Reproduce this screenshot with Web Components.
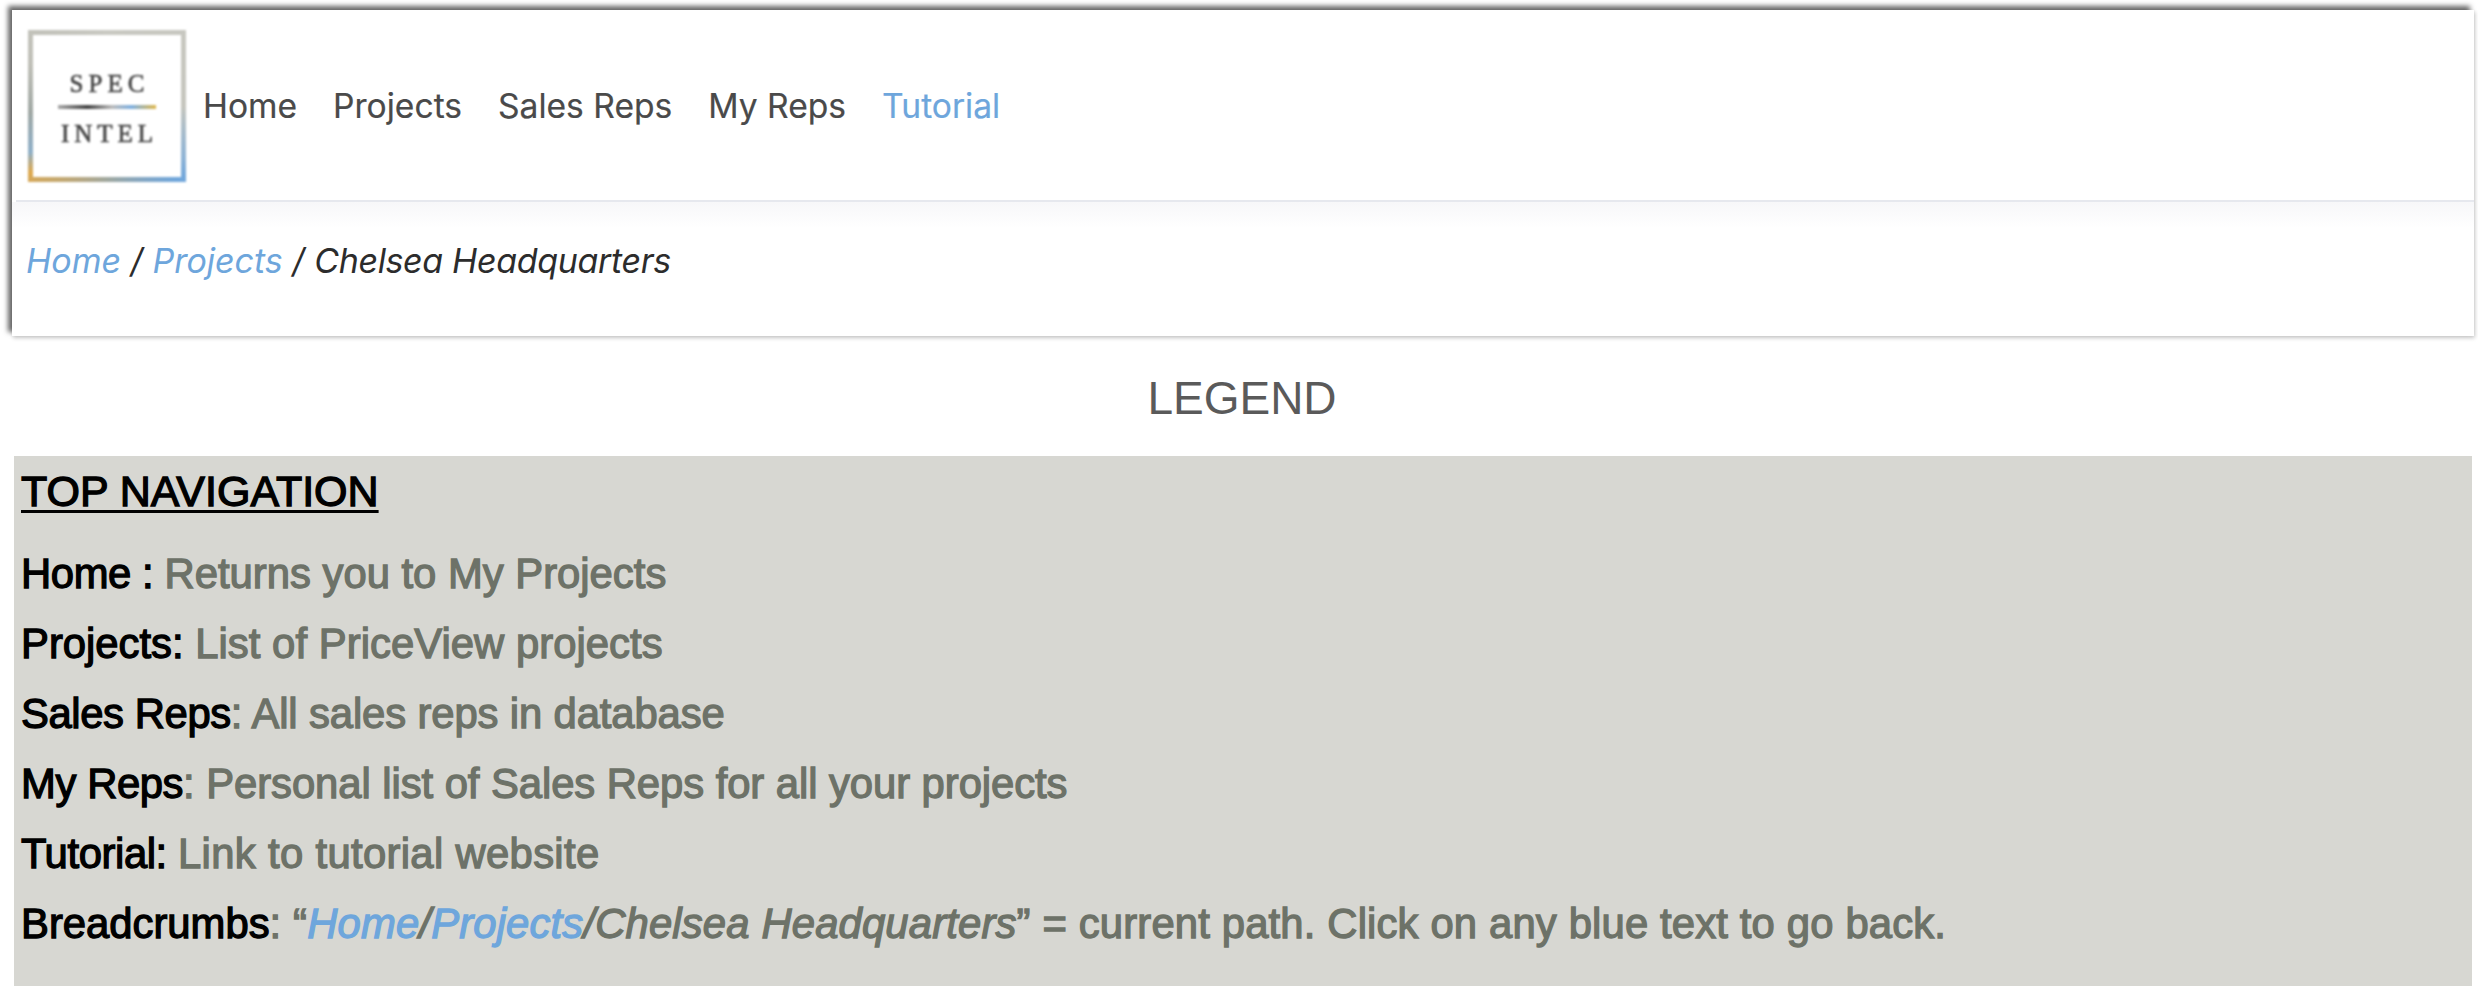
<!DOCTYPE html>
<html>
<head>
<meta charset="utf-8">
<title>Legend</title>
<style>
  html, body { margin: 0; padding: 0; background: #fff; }
  body { width: 2478px; height: 986px; overflow: hidden; font-family: "Liberation Sans", Arial, sans-serif; }
</style>
</head>
<body>
<spec-header>
  <nav-link slot="nav">Home</nav-link>
  <nav-link slot="nav">Projects</nav-link>
  <nav-link slot="nav">Sales Reps</nav-link>
  <nav-link slot="nav">My Reps</nav-link>
  <nav-link slot="nav" active>Tutorial</nav-link>
  <span slot="crumbs"><a>Home</a> / <a>Projects</a> / <span style="letter-spacing:-.35px">Chelsea Headquarters</span></span>
</spec-header>
<legend-title>LEGEND</legend-title>
<legend-panel>
  <span slot="title">TOP NAVIGATION</span>
  <legend-row label="Home : ">Returns you to My Projects</legend-row>
  <legend-row label="Projects: " style="--label-ls:0px;--value-ls:.05px">List of PriceView projects</legend-row>
  <legend-row label="Sales Reps" sep=": " style="--value-ls:-.12px">All sales reps in database</legend-row>
  <legend-row label="My Reps" sep=": " style="--value-ls:-.06px">Personal list of Sales Reps for all your projects</legend-row>
  <legend-row label="Tutorial: " style="--value-ls:.33px">Link to tutorial website</legend-row>
  <legend-row label="Breadcrumbs" sep=": " style="--label-ls:0px;--value-ls:.16px">“<i class="b">Home</i><i>/</i><i class="b">Projects</i><i>/Chelsea Headquarters</i>” = current path. Click on any blue text to go back.</legend-row>
</legend-panel>
<script>
  class SpecLogo extends HTMLElement {
    constructor() {
      super();
      this.attachShadow({ mode: "open" }).innerHTML = `
        <style>
          :host { display: block; width: 158px; height: 152px; flex: none; box-sizing: border-box;
            border: 5px solid; border-image: conic-gradient(from 0deg at 50% 50%, #c9c9c2 0deg, #c6c6be 90deg, #8fb4d6 125deg, #6fa6dc 135deg, #d0a860 225deg, #e0aa4e 228deg, #90b0c8 238deg, #a0a8a4 265deg, #c0c0b8 300deg, #c9c9c2 360deg) 1;
            font-family: "Liberation Serif", serif; color: #444; text-align: center; filter: blur(.8px); }
          .box { display: flex; flex-direction: column; align-items: center; padding-top: 35px; }
          .t { font-size: 25px; line-height: 27px; letter-spacing: 5px; margin-right: -5px; -webkit-text-stroke: .6px #444; }
          .l { width: 98px; height: 4px; margin: 8px 0 11px; background: linear-gradient(90deg, #aaa, #444 30%, #bbb 55%, #7fb0e0 75%, #e0b84e 100%); }
        </style>
        <div class="box"><div class="t">SPEC</div><div class="l"></div><div class="t">INTEL</div></div>`;
    }
  }
  customElements.define("spec-logo", SpecLogo);

  class NavLink extends HTMLElement {
    constructor() {
      super();
      this.attachShadow({ mode: "open" }).innerHTML = `
        <style>
          :host { display: block; color: #4a4a4a; }
          :host([active]) { color: #6ea6dc; }
        </style>
        <slot></slot>`;
    }
  }
  customElements.define("nav-link", NavLink);

  class SpecHeader extends HTMLElement {
    constructor() {
      super();
      this.attachShadow({ mode: "open" }).innerHTML = `
        <style>
          :host { display: block; box-sizing: border-box; margin: 10px 4px 0 12px; height: 326px; background: #fff;
            box-shadow: -4px -4px 5px #666, 1px 2px 4px #c8c8c8; font-family: Inter, sans-serif; }
          nav { display: flex; align-items: center; gap: 36px; height: 190px; padding: 0 0 0 12px;
            border-bottom: 2px solid #e6e8ee; margin-left: 4px; font-size: 33.6px; -webkit-text-stroke: .2px currentColor; }
          .logo { margin-right: -19px; margin-top: 1px; }
          .crumbs { height: 134px; box-sizing: border-box; padding: 38px 0 0 14px; font-size: 34px; font-style: italic; color: #2c2c2c;
            background: linear-gradient(#f7f7f9, #fff 26px); }
          ::slotted(span) { display: block; }
        </style>
        <nav><div class="logo"><spec-logo></spec-logo></div><slot name="nav"></slot></nav>
        <div class="crumbs"><slot name="crumbs"></slot></div>`;
    }
    connectedCallback() {
      // breadcrumb links live in light dom, colour them here
      this.querySelectorAll("a").forEach(a => { a.style.color = "#6ea6dc"; });
    }
  }
  customElements.define("spec-header", SpecHeader);

  class LegendTitle extends HTMLElement {
    constructor() {
      super();
      this.attachShadow({ mode: "open" }).innerHTML = `
        <style>
          :host { display: block; text-align: center; font-size: 46px; line-height: 50px; color: #5a5a5a; padding: 37px 0 33px 6px; height: 50px; }
        </style>
        <slot></slot>`;
    }
  }
  customElements.define("legend-title", LegendTitle);

  class LegendPanel extends HTMLElement {
    constructor() {
      super();
      this.attachShadow({ mode: "open" }).innerHTML = `
        <style>
          :host { display: block; box-sizing: border-box; margin: 0 6px 0 14px; height: 530px; background: #d7d7d2; padding: 10px 0 0 7px; }
          .title { font-size: 43px; line-height: 50px; color: #000; text-decoration: underline; text-decoration-thickness: 3px; text-underline-offset: 4px; -webkit-text-stroke: 1.3px #000; margin-bottom: 33px; }
          .rows { display: flex; flex-direction: column; gap: 20px; }
        </style>
        <div class="title"><slot name="title"></slot></div>
        <div class="rows"><slot></slot></div>`;
    }
  }
  customElements.define("legend-panel", LegendPanel);

  class LegendRow extends HTMLElement {
    constructor() {
      super();
      const root = this.attachShadow({ mode: "open" });
      root.innerHTML = `
        <style>
          :host { display: block; font-size: 41.8px; line-height: 50px; color: #6d7268; -webkit-text-stroke: 1.3px currentColor; white-space: nowrap; letter-spacing: var(--value-ls, 0); }
          .k { color: #000; letter-spacing: var(--label-ls, -.4px); }
          .k, .s { white-space: pre; }
          ::slotted(i.b) { color: #6ea6dc; }
        </style>
        <span class="k"></span><span class="s"></span><slot></slot>`;
      root.querySelector(".k").textContent = this.getAttribute("label");
      root.querySelector(".s").textContent = this.getAttribute("sep") || "";
    }
  }
  customElements.define("legend-row", LegendRow);
</script>
</body>
</html>
